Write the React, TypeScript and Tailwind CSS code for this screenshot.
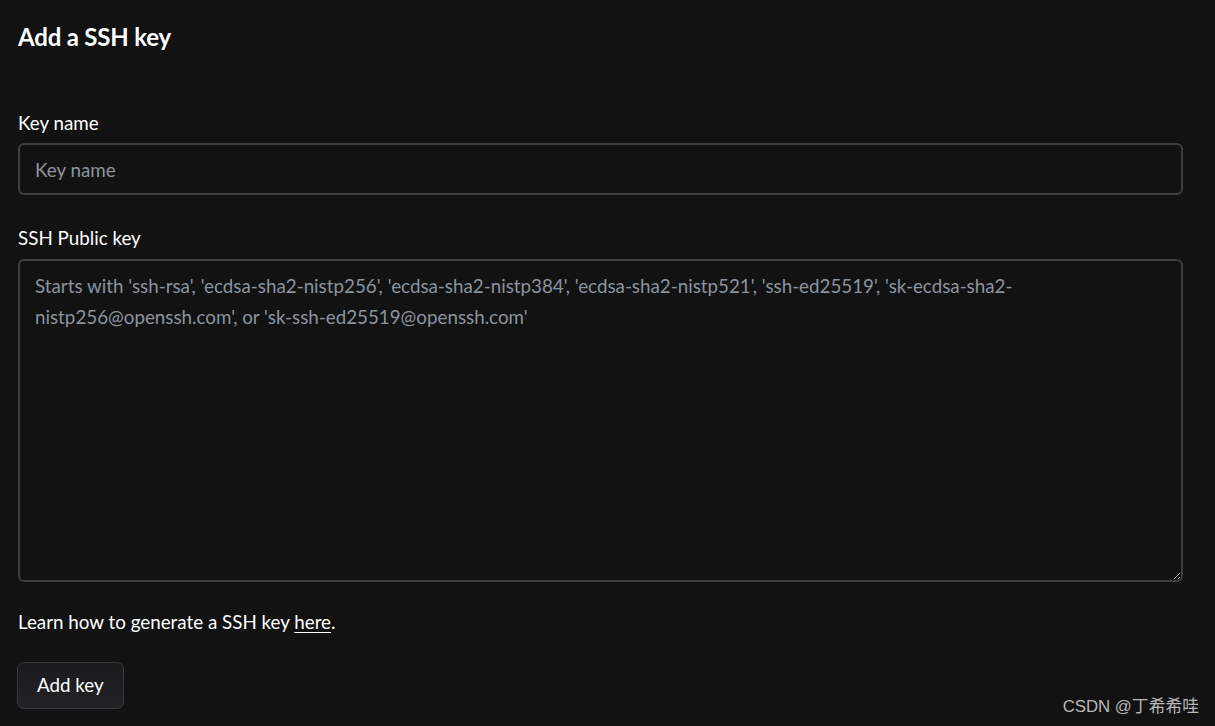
export default function App() {
  const font = { fontFamily: "Lato, 'Noto Sans', sans-serif" };
  return (
    <div
      className="min-h-[726px] w-full bg-[#121212] text-white pl-[18px] pr-[32px] pt-[21px] relative"
      style={font}
    >
      <h1 className="text-[24px] font-bold leading-[32px] tracking-[-0.2px]">Add a SSH key</h1>

      <div className="mt-[57px] flex flex-col">
        <label className="text-[18.8px] leading-[26px]">Key name</label>
        <input
          placeholder="Key name"
          className="mt-[7px] h-[52px] w-full rounded-[6px] border-2 border-[#3f3f41] bg-[#121212] px-[15px] text-[18.8px] text-white outline-none placeholder:text-[#8b949e]"
        />
      </div>

      <div className="mt-[30px] flex flex-col">
        <label className="text-[18.8px] leading-[26px]">SSH Public key</label>
        <textarea
          placeholder="Starts with 'ssh-rsa', 'ecdsa-sha2-nistp256', 'ecdsa-sha2-nistp384', 'ecdsa-sha2-nistp521', 'ssh-ed25519', 'sk-ecdsa-sha2-nistp256@openssh.com', or 'sk-ssh-ed25519@openssh.com'"
          className="mt-[8px] h-[323px] w-full resize-y rounded-[6px] border-2 border-[#3f3f41] bg-[#121212] px-[15px] pt-[9px] text-[18.8px] leading-[31px] text-white outline-none placeholder:text-[#8b949e]"
        />
      </div>

      <p className="mt-[27px] text-[18.8px] leading-[26px]">
        Learn how to generate a SSH key{" "}
        <a href="#" className="underline underline-offset-[3px]">
          here
        </a>
        .
      </p>

      <button className="-ml-px mt-[27px] h-[47px] rounded-[7px] border border-[#3a3a3c] bg-gradient-to-b from-[#1a1a1c] to-[#222326] px-[19px] text-[18.8px] text-white">
        Add key
      </button>

      <div
        className="absolute bottom-[7px] right-[16px] text-[16.8px] text-[#b8b8b8]"
        style={{ fontFamily: "'Liberation Sans', 'Noto Sans CJK SC', sans-serif" }}
      >
        CSDN @丁希希哇
      </div>
    </div>
  );
}
